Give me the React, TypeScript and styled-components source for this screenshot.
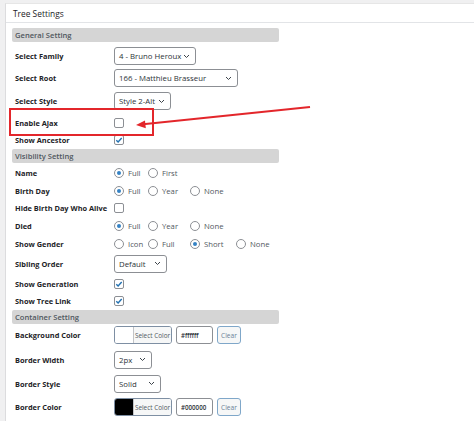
import React from 'react';
import styled, { createGlobalStyle } from 'styled-components';

const GlobalStyle = createGlobalStyle`
  html, body {
    margin: 0;
    padding: 0;
    background: #f0f0f1;
  }
  body {
    font-family: 'Open Sans', 'Noto Sans', sans-serif;
    color: #1d2327;
  }
  * {
    box-sizing: border-box;
  }
`;

const Page = styled.div`
  position: relative;
  width: 474px;
  height: 421px;
  padding: 3px 0 0 5px;
  overflow: hidden;
`;

const Panel = styled.div`
  background: #fff;
  border-left: 1px solid #dcdcde;
  border-top: 1px solid #e6e6e6;
  margin-right: -10px;
  min-height: 430px;
`;

const PanelHeader = styled.div`
  height: 19px;
  display: flex;
  align-items: center;
  padding-left: 7px;
  font-size: 8.4px;
  font-weight: 500;
  color: #1d2327;
  border-bottom: 1px solid #e2e4e7;
`;

const PanelBody = styled.div`
  padding: 5px 0 0 6px;
`;

const SectionBar = styled.div`
  width: 267px;
  height: 14px;
  display: flex;
  align-items: center;
  padding-left: 3px;
  background: #d5d5d5;
  border-radius: 2px;
  font-size: 7.6px;
  font-weight: 600;
  color: #50575e;
`;

const FormRow = styled.div<{ $h: number }>`
  display: grid;
  grid-template-columns: 102px 1fr;
  align-items: center;
  height: ${(p) => p.$h}px;
`;

const Label = styled.div`
  padding-left: 3px;
  font-size: 7.4px;
  font-weight: 700;
  color: #1d2327;
  white-space: nowrap;
`;

const SelectBox = styled.div<{ $w: number }>`
  width: ${(p) => p.$w}px;
  height: 18px;
  display: flex;
  align-items: center;
  justify-content: space-between;
  padding: 0 5px 0 4px;
  border: 1px solid #8c8f94;
  border-radius: 3px;
  background: #fff;
  font-size: 7.8px;
  color: #2c3338;
  white-space: nowrap;
`;

const CheckBox = styled.span`
  width: 10px;
  height: 10px;
  display: inline-flex;
  align-items: center;
  justify-content: center;
  border: 1px solid #8c8f94;
  border-radius: 2px;
  background: #fff;
`;

const RadioGroup = styled.div`
  display: grid;
  grid-template-columns: 34px 42px 46px auto;
  align-items: center;
`;

const RadioOption = styled.label`
  display: flex;
  align-items: center;
  gap: 4px;
  font-size: 7.7px;
  color: #50575e;
`;

const RadioDot = styled.span<{ $on?: boolean }>`
  width: 10px;
  height: 10px;
  display: inline-flex;
  align-items: center;
  justify-content: center;
  border: 1px solid #8c8f94;
  border-radius: 50%;
  background: #fff;

  &::after {
    content: '';
    width: 4px;
    height: 4px;
    border-radius: 50%;
    background: ${(p) => (p.$on ? '#3582c4' : 'transparent')};
  }
`;

const ColorRow = styled.div`
  display: flex;
  align-items: center;
  gap: 4px;
`;

const ColorButton = styled.div`
  display: flex;
  height: 18px;
  width: 58px;
  border: 1px solid #7e8fa3;
  border-radius: 3px;
  overflow: hidden;
`;

const Swatch = styled.span<{ $c: string }>`
  width: 18px;
  background: ${(p) => p.$c};
`;

const ColorText = styled.span`
  flex: 1;
  display: flex;
  align-items: center;
  justify-content: center;
  background: #f6f7f7;
  border-left: 1px solid #c3c4c7;
  font-size: 6.4px;
  color: #50575e;
  white-space: nowrap;
`;

const HexInput = styled.div`
  width: 37px;
  height: 18px;
  display: flex;
  align-items: center;
  padding-left: 4px;
  border: 1px solid #8c8f94;
  border-radius: 3px;
  font-size: 6.2px;
  font-weight: 600;
  color: #2c3338;
`;

const ClearButton = styled.div`
  width: 24px;
  height: 18px;
  display: flex;
  align-items: center;
  justify-content: center;
  border: 1px solid #7fa7c9;
  border-radius: 3px;
  background: #f6f7f7;
  font-size: 6.6px;
  color: #6a8197;
`;

const Callout = styled.div`
  position: absolute;
  left: 9px;
  top: 108px;
  width: 145px;
  height: 28px;
  border: 2px solid #e3262b;
  pointer-events: none;
`;

const ArrowLayer = styled.svg`
  position: absolute;
  left: 0;
  top: 0;
  pointer-events: none;
`;

const Chevron = () => (
  <svg width="7" height="5" viewBox="0 0 7 5">
    <path d="M1 1l2.5 2.5L6 1" fill="none" stroke="#3c434a" strokeWidth="1" />
  </svg>
);

const Select = ({ w, value }: { w: number; value: string }) => (
  <div>
    <SelectBox $w={w}>
      <span>{value}</span>
      <Chevron />
    </SelectBox>
  </div>
);

const Check = ({ on }: { on?: boolean }) => (
  <div style={{ display: 'flex' }}>
    <CheckBox>
      {on && (
        <svg width="8" height="8" viewBox="0 0 8 8">
          <path d="M1.3 4.2l1.8 1.8 3.6-4" fill="none" stroke="#2271b1" strokeWidth="1.4" />
        </svg>
      )}
    </CheckBox>
  </div>
);

const Radios = ({ options, selected }: { options: string[]; selected: string }) => (
  <RadioGroup>
    {options.map((o) => (
      <RadioOption key={o}>
        <RadioDot $on={o === selected} />
        {o}
      </RadioOption>
    ))}
  </RadioGroup>
);

const ColorPicker = ({ color, hex }: { color: string; hex: string }) => (
  <ColorRow>
    <ColorButton>
      <Swatch $c={color} />
      <ColorText>Select Color</ColorText>
    </ColorButton>
    <HexInput>{hex}</HexInput>
    <ClearButton>Clear</ClearButton>
  </ColorRow>
);

export default function App() {
  return (
    <>
      <GlobalStyle />
      <Page>
        <Panel>
          <PanelHeader>Tree Settings</PanelHeader>
          <PanelBody>
            <SectionBar>General Setting</SectionBar>
            <div style={{ height: 3 }} />
            <FormRow $h={22}>
              <Label>Select Family</Label>
              <Select w={82} value="4 - Bruno Heroux" />
            </FormRow>
            <FormRow $h={22}>
              <Label>Select Root</Label>
              <Select w={124} value="166 - Matthieu Brasseur" />
            </FormRow>
            <FormRow $h={24}>
              <Label>Select Style</Label>
              <Select w={57} value="Style 2-Alt" />
            </FormRow>
            <FormRow $h={19}>
              <Label>Enable Ajax</Label>
              <Check />
            </FormRow>
            <FormRow $h={15}>
              <Label>Show Ancestor</Label>
              <Check on />
            </FormRow>
            <div style={{ height: 2 }} />
            <SectionBar>Visibility Setting</SectionBar>
            <FormRow $h={19}>
              <Label>Name</Label>
              <Radios options={['Full', 'First']} selected="Full" />
            </FormRow>
            <FormRow $h={17}>
              <Label>Birth Day</Label>
              <Radios options={['Full', 'Year', 'None']} selected="Full" />
            </FormRow>
            <FormRow $h={18}>
              <Label>Hide Birth Day Who Alive</Label>
              <Check />
            </FormRow>
            <FormRow $h={18}>
              <Label>Died</Label>
              <Radios options={['Full', 'Year', 'None']} selected="Full" />
            </FormRow>
            <FormRow $h={17}>
              <Label>Show Gender</Label>
              <Radios options={['Icon', 'Full', 'Short', 'None']} selected="Short" />
            </FormRow>
            <FormRow $h={23}>
              <Label>Sibling Order</Label>
              <Select w={53} value="Default" />
            </FormRow>
            <FormRow $h={18}>
              <Label>Show Generation</Label>
              <Check on />
            </FormRow>
            <FormRow $h={16}>
              <Label>Show Tree Link</Label>
              <Check on />
            </FormRow>
            <div style={{ height: 1 }} />
            <SectionBar>Container Setting</SectionBar>
            <FormRow $h={22}>
              <Label>Background Color</Label>
              <ColorPicker color="#ffffff" hex="#ffffff" />
            </FormRow>
            <FormRow $h={27}>
              <Label>Border Width</Label>
              <Select w={38} value="2px" />
            </FormRow>
            <FormRow $h={21}>
              <Label>Border Style</Label>
              <Select w={47} value="Solid" />
            </FormRow>
            <FormRow $h={26}>
              <Label>Border Color</Label>
              <ColorPicker color="#000000" hex="#000000" />
            </FormRow>
          </PanelBody>
        </Panel>
        <Callout />
        <ArrowLayer width="474" height="421" viewBox="0 0 474 421">
          <line x1="310" y1="107" x2="143" y2="124.3" stroke="#e3262b" strokeWidth="2" />
          <path d="M136 125 L145 120.6 L145.8 128.2 Z" fill="#e3262b" />
        </ArrowLayer>
      </Page>
    </>
  );
}
